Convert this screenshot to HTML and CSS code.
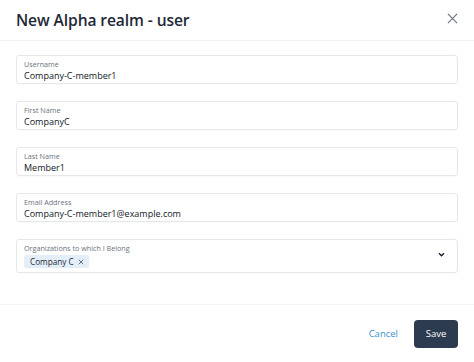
FILE: index.html
```html
<!DOCTYPE html>
<html>
<head>
<meta charset="utf-8">
<link rel="stylesheet" href="styles.css">
</head>
<body>
<div class="modal">
  <div class="header">
    <h1 class="title">New Alpha realm - user</h1>
    <svg class="close" width="11" height="11" viewBox="0 0 12 12"><path d="M1 1L11 11M11 1L1 11" stroke="#6b7280" stroke-width="1.3" fill="none"/></svg>
  </div>
  <div class="body">
    <div class="field">
      <div class="label">Username</div>
      <div class="value">Company-C-member1</div>
    </div>
    <div class="field">
      <div class="label">First Name</div>
      <div class="value">CompanyC</div>
    </div>
    <div class="field">
      <div class="label">Last Name</div>
      <div class="value">Member1</div>
    </div>
    <div class="field">
      <div class="label">Email Address</div>
      <div class="value">Company-C-member1@example.com</div>
    </div>
    <div class="field select">
      <div class="select-main">
        <div class="label">Organizations to which I Belong</div>
        <div class="chips"><span class="chip">Company C <svg width="6" height="6" viewBox="0 0 8 8"><path d="M1 1L7 7M7 1L1 7" stroke="#4b5563" stroke-width="1.1" fill="none"/></svg></span></div>
      </div>
      <svg class="chev" width="7" height="5" viewBox="0 0 8 6"><path d="M1 1.5L4 4.5L7 1.5" stroke="#111827" stroke-width="1.6" fill="none"/></svg>
    </div>
  </div>
  <div class="footer">
    <button class="cancel">Cancel</button>
    <button class="save">Save</button>
  </div>
</div>
</body>
</html>
```
FILE: styles.css
```css
* { box-sizing: border-box; }
html, body { margin: 0; padding: 0; background: #fff; }
body { font-family: "Open Sans", "Noto Sans", sans-serif; color: #1f2937; }
.modal { width: 474px; height: 362px; display: flex; flex-direction: column; }
.header { height: 41px; display: flex; align-items: center; justify-content: space-between; padding: 0 16px 1px 16px; border-bottom: 1px solid #f1f2f4; }
.title { margin: 0; font-size: 15.6px; font-weight: 600; color: #1f2937; letter-spacing: -0.1px; }
.close { margin-top: -2px; }
.body { flex: 1; padding: 14px 16px 0 16px; display: flex; flex-direction: column; gap: 17px; border-bottom: 1px solid #f3f4f6; }
.field { height: 29px; border: 1px solid #e5e7eb; border-radius: 3px; padding: 3px 7px 0 7px; display: flex; flex-direction: column; box-shadow: 0 1px 1px rgba(0,0,0,0.02); }
.label { font-size: 7.2px; line-height: 10px; color: #6b7280; }
.value { font-size: 9px; line-height: 13px; color: #111827; font-weight: 500; }
.field.select { height: 34px; flex-direction: row; align-items: center; justify-content: space-between; padding: 3px 12px 0 7px; }
.select-main { display: flex; flex-direction: column; align-self: flex-start; }
.chips { margin-top: 2px; display: flex; }
.chip { display: inline-flex; align-items: center; gap: 4px; background: #e4eef8; border-radius: 2px; font-size: 8.2px; line-height: 13px; padding: 0 5px 0 6px; color: #1f2937; font-weight: 500; }
.chev { margin-top: -6px; }
.footer { height: 57px; display: flex; align-items: center; justify-content: flex-end; padding: 0 16px 0 0; gap: 16px; }
button { font-family: inherit; border: none; cursor: pointer; }
.cancel { background: none; color: #3b8fd0; font-size: 9.5px; padding: 0; }
.save { background: #2c3b50; color: #fff; font-size: 9.5px; font-weight: 500; width: 44px; height: 28px; border-radius: 4px; }
```
